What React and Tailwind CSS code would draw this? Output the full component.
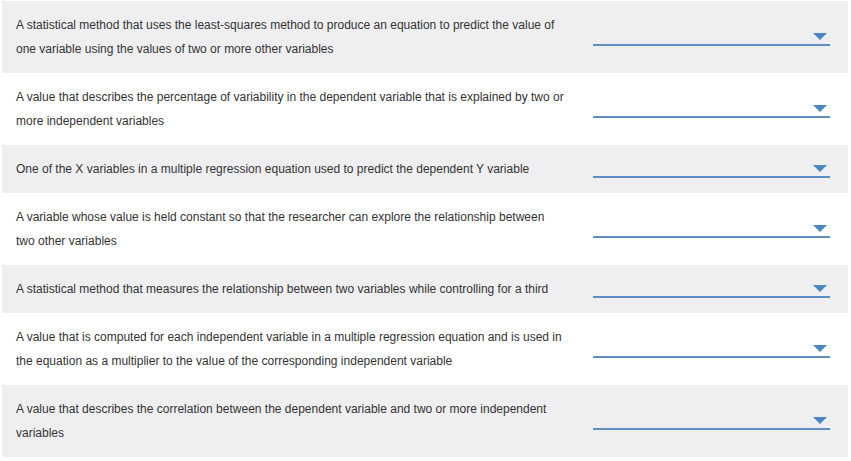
import React from "react";

const rows = [
  "A statistical method that uses the least-squares method to produce an equation to predict the value of one variable using the values of two or more other variables",
  "A value that describes the percentage of variability in the dependent variable that is explained by two or more independent variables",
  "One of the X variables in a multiple regression equation used to predict the dependent Y variable",
  "A variable whose value is held constant so that the researcher can explore the relationship between two other variables",
  "A statistical method that measures the relationship between two variables while controlling for a third",
  "A value that is computed for each independent variable in a multiple regression equation and is used in the equation as a multiplier to the value of the corresponding independent variable",
  "A value that describes the correlation between the dependent variable and two or more independent variables",
];

function Dropdown() {
  return (
    <div className="relative w-[237px] h-[18px] border-b-2 border-[#5a8fc4]">
      <span className="absolute right-[3px] top-[5px] w-0 h-0 border-l-[7px] border-r-[7px] border-t-[7px] border-l-transparent border-r-transparent border-t-[#4a86c0]" />
    </div>
  );
}

export default function App() {
  return (
    <div
      className="w-[851px] h-[461px] bg-white pt-[1px] pl-[2px]"
      style={{ fontFamily: '"Liberation Sans", Arial, sans-serif' }}
    >
      <div className="w-[846px]">
        {rows.map((text, i) => (
          <div
            key={i}
            className={
              "flex items-center py-[12px] pl-[14px] " +
              (i % 2 === 0 ? "bg-[#efeff1]" : "bg-white")
            }
          >
            <div className="w-[549px] text-[12px] leading-[24px] text-[#333333]">
              {text}
            </div>
            <div className="ml-[28px]">
              <Dropdown />
            </div>
          </div>
        ))}
      </div>
    </div>
  );
}
